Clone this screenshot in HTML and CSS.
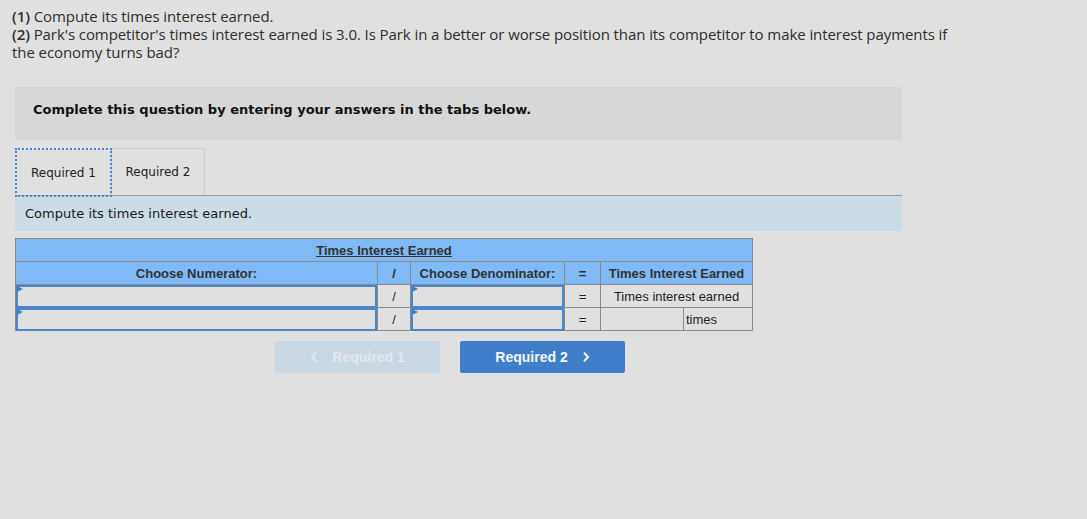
FILE: index.html
```html
<!DOCTYPE html>
<html>
<head>
<meta charset="utf-8">
<link rel="stylesheet" href="styles.css">
</head>
<body>
<div class="page">
  <div class="question">
    <p><b>(1)</b> Compute its times interest earned.</p>
    <p><b>(2)</b> Park's competitor's times interest earned is 3.0. Is Park in a better or worse position than its competitor to make interest payments if the economy turns bad?</p>
  </div>
  <div class="panel">
    <div class="instructions">Complete this question by entering your answers in the tabs below.</div>
    <div class="tabs">
      <div class="tab active">Required 1</div>
      <div class="tab">Required 2</div>
    </div>
    <div class="tabinfo">Compute its times interest earned.</div>
    <table class="grid">
      <colgroup>
        <col class="c1"><col class="c2"><col class="c3"><col class="c4"><col class="c5"><col class="c6">
      </colgroup>
      <tr class="head">
        <th colspan="6"><u>Times Interest Earned</u></th>
      </tr>
      <tr class="head">
        <th>Choose Numerator:</th>
        <th>/</th>
        <th>Choose Denominator:</th>
        <th>=</th>
        <th colspan="2">Times Interest Earned</th>
      </tr>
      <tr>
        <td class="inp"><div class="box"><span class="tri"></span></div></td>
        <td class="op">/</td>
        <td class="inp"><div class="box"><span class="tri"></span></div></td>
        <td class="op">=</td>
        <td colspan="2" class="lbl">Times interest earned</td>
      </tr>
      <tr>
        <td class="inp"><div class="box"><span class="tri"></span></div></td>
        <td class="op">/</td>
        <td class="inp"><div class="box"><span class="tri"></span></div></td>
        <td class="op">=</td>
        <td></td>
        <td class="unit">times</td>
      </tr>
    </table>
    <div class="nav">
      <button class="btn prev"><svg class="chev" viewBox="0 0 10 14" width="8" height="12"><path d="M7.5 1.5 L2.5 7 L7.5 12.5" fill="none" stroke="currentColor" stroke-width="2.6"/></svg><span>Required 1</span></button>
      <button class="btn next"><span>Required 2</span><svg class="chev" viewBox="0 0 10 14" width="8" height="12"><path d="M2.5 1.5 L7.5 7 L2.5 12.5" fill="none" stroke="currentColor" stroke-width="2.6"/></svg></button>
    </div>
  </div>
</div>
</body>
</html>
```

FILE: styles.css
```css
html, body {
  margin: 0;
  padding: 0;
  background: #e0e0e0;
}
.page {
  padding: 7px 0 0 12px;
  width: 1075px;
  height: 512px;
  box-sizing: border-box;
}
.question {
  font-family: "Open Sans", Lato, sans-serif;
  font-size: 15px;
  line-height: 18px;
  letter-spacing: -0.08px;
  color: #2e2e2e;
  width: 945px;
  height: 55px;
}
.question p {
  margin: 0;
}
.question b {
  font-weight: 600;
}
.panel {
  margin-left: 3px;
  width: 887px;
  margin-top: 25px;
}
.instructions {
  background: #d7d7d7;
  height: 53px;
  padding-left: 18px;
  padding-bottom: 9px;
  font-family: "DejaVu Sans", Verdana, sans-serif;
  font-weight: bold;
  font-size: 13px;
  color: #111;
  box-sizing: border-box;
  display: flex;
  align-items: center;
}
.tabs {
  display: flex;
  margin-top: 8px;
  height: 47px;
  border-bottom: 1px solid #9a9a9a;
}
.tab {
  font-family: "DejaVu Sans", Verdana, sans-serif;
  font-size: 12px;
  color: #222;
  display: flex;
  align-items: center;
  justify-content: center;
  box-sizing: border-box;
  border: 1px solid #cccccc;
  border-bottom: none;
}
.tab.active {
  width: 97px;
  border: 2px dotted #4a86d0;
  height: 49px;
  margin-right: -1px;
  position: relative;
  z-index: 1;
}
.tab:not(.active) {
  width: 94px;
}
.tabinfo {
  background: #cbdce6;
  height: 35px;
  padding-left: 10px;
  font-family: "DejaVu Sans", Verdana, sans-serif;
  font-size: 13px;
  color: #1a1a1a;
  display: flex;
  align-items: center;
}
.grid {
  margin-top: 7px;
  border-collapse: collapse;
  width: 737px;
  table-layout: fixed;
  font-family: "Liberation Sans", Arial, sans-serif;
  font-size: 13px;
  color: #222;
}
.c1 { width: 362px; }
.c2 { width: 33px; }
.c3 { width: 154px; }
.c4 { width: 36px; }
.c5 { width: 83px; }
.c6 { width: 69px; }
.grid th, .grid td {
  border: 1px solid #8a8a8a;
  height: 23px;
  padding: 0;
  text-align: center;
  box-sizing: border-box;
}
.grid tr.head th {
  background: #80baf6;
  font-weight: bold;
  color: #333;
}
.grid td.inp {
  padding: 0;
}
.box {
  height: 23px;
  box-sizing: border-box;
  border: 2px solid #4a86c8;
  position: relative;
  margin: -1px 0 -1px 0;
}
.tri {
  position: absolute;
  left: -1px;
  top: -1px;
  width: 0;
  height: 0;
  border-top: 3px solid transparent;
  border-bottom: 3px solid transparent;
  border-left: 6px solid #3d7fd0;
}
.grid td.unit {
  text-align: left;
  padding-left: 2px;
}
.nav {
  display: flex;
  gap: 20px;
  margin-top: 10px;
  padding-left: 260px;
}
.btn {
  width: 165px;
  height: 32px;
  border: none;
  border-radius: 2px;
  font-family: "Liberation Sans", Arial, sans-serif;
  font-weight: bold;
  font-size: 14px;
  display: flex;
  align-items: center;
  justify-content: center;
  gap: 14px;
  padding: 0;
}
.btn.prev {
  background: #cad8e5;
  color: #e4e8ec;
}
.btn.next {
  background: #3f7fca;
  color: #f4f7fb;
}
```
